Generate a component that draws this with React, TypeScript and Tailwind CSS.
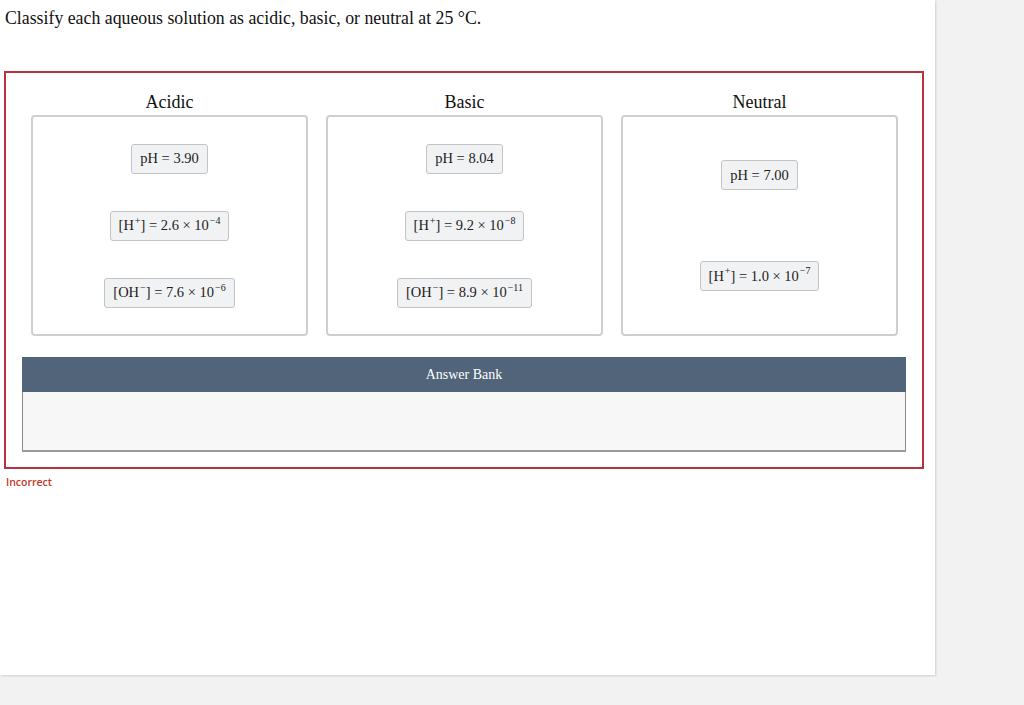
import type { ReactNode } from 'react';

const serif = { fontFamily: '"Liberation Serif", "Times New Roman", serif' };

function Chip({ children }: { children: ReactNode }) {
  return (
    <div className="h-[30px] px-[8px] flex items-center bg-[#f1f2f4] border border-[#c4c4c4] rounded-[3px] text-[14.5px] text-[#222] leading-none whitespace-nowrap">
      {children}
    </div>
  );
}

function Sup({ children }: { children: ReactNode }) {
  return <sup className="text-[10px] top-[-0.5em] ml-[1px]">{children}</sup>;
}

const columns: { label: string; items: ReactNode[] }[] = [
  {
    label: 'Acidic',
    items: [
      <>pH = 3.90</>,
      <>
        [H<Sup>+</Sup>] = 2.6 × 10<Sup>−4</Sup>
      </>,
      <>
        [OH<Sup>−</Sup>] = 7.6 × 10<Sup>−6</Sup>
      </>,
    ],
  },
  {
    label: 'Basic',
    items: [
      <>pH = 8.04</>,
      <>
        [H<Sup>+</Sup>] = 9.2 × 10<Sup>−8</Sup>
      </>,
      <>
        [OH<Sup>−</Sup>] = 8.9 × 10<Sup>−11</Sup>
      </>,
    ],
  },
  {
    label: 'Neutral',
    items: [
      <>pH = 7.00</>,
      <>
        [H<Sup>+</Sup>] = 1.0 × 10<Sup>−7</Sup>
      </>,
    ],
  },
];

export default function App() {
  return (
    <div className="w-full h-[705px] bg-[#f2f2f2] overflow-hidden" style={serif}>
      <div className="w-[935px] h-[675px] bg-white shadow-[1px_1px_2px_rgba(0,0,0,0.15)] flex flex-col">
        <div className="pl-[5px] pt-[7px] text-[17.8px] leading-[22px] text-[#111]">
          Classify each aqueous solution as acidic, basic, or neutral at 25 °C.
        </div>

        <div className="ml-[4px] mt-[42px] w-[920px] h-[398px] border-2 border-[#b7343f] flex flex-col">
          <div className="grid grid-cols-3 gap-[18px] pl-[25px] pr-[24px] pt-[16px]">
            {columns.map((col) => (
              <div key={col.label} className="flex flex-col">
                <div className="text-center text-[18px] leading-[26px] text-[#111]">
                  {col.label}
                </div>
                <div className="h-[221px] border-2 border-[#cfcfcf] rounded-[4px] py-[8px] flex flex-col items-center justify-around">
                  {col.items.map((item, i) => (
                    <Chip key={i}>{item}</Chip>
                  ))}
                </div>
              </div>
            ))}
          </div>

          <div className="mx-[16px] mt-[21px]">
            <div className="h-[35px] bg-[#51647a] flex items-center justify-center text-white text-[14px]">
              Answer Bank
            </div>
            <div className="h-[60px] bg-[#f7f7f7] border-x border-[#8a8a8a] border-b-2 border-b-[#9a9a9a]" />
          </div>
        </div>

        <div
          className="pl-[6px] pt-[6px] text-[10.5px] font-semibold text-[#c0392b]"
          style={{ fontFamily: '"Open Sans", "Liberation Sans", sans-serif' }}
        >
          Incorrect
        </div>
      </div>
    </div>
  );
}
